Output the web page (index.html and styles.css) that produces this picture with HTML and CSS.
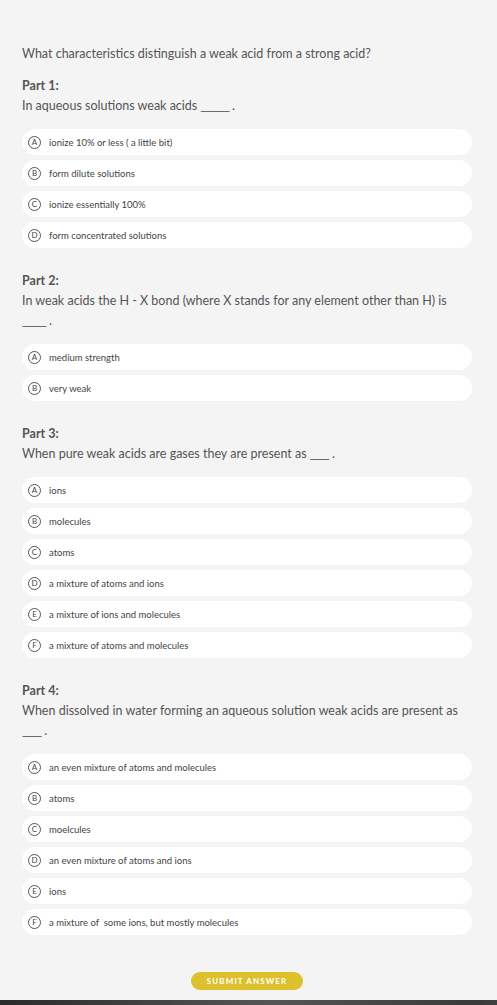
FILE: index.html
```html
<!DOCTYPE html>
<html lang="en">
<head>
  <meta charset="UTF-8">
  <meta name="viewport" content="width=device-width, initial-scale=1.0">
  <title>Weak Acids</title>
  <link rel="stylesheet" href="styles.css">
</head>
<body>
<div class="page">
  <main class="quiz">
    <p class="prompt">What characteristics distinguish a weak acid from a strong acid?</p>

    <section class="part">
      <h3 class="part-title">Part 1:</h3>
      <p class="part-text">In aqueous solutions weak acids <span class="blank">______</span> .</p>
      <ul class="choices">
        <li class="choice"><span class="letter">A</span>ionize 10% or less ( a little bit)</li>
        <li class="choice"><span class="letter">B</span>form dilute solutions</li>
        <li class="choice"><span class="letter">C</span>ionize essentially 100%</li>
        <li class="choice"><span class="letter">D</span>form concentrated solutions</li>
      </ul>
    </section>

    <section class="part">
      <h3 class="part-title">Part 2:</h3>
      <p class="part-text">In weak acids the H - X bond (where X stands for any element other than H) is <span class="blank">_____</span> .</p>
      <ul class="choices">
        <li class="choice"><span class="letter">A</span>medium strength</li>
        <li class="choice"><span class="letter">B</span>very weak</li>
      </ul>
    </section>

    <section class="part">
      <h3 class="part-title">Part 3:</h3>
      <p class="part-text">When pure weak acids are gases they are present as <span class="blank">____</span> .</p>
      <ul class="choices">
        <li class="choice"><span class="letter">A</span>ions</li>
        <li class="choice"><span class="letter">B</span>molecules</li>
        <li class="choice"><span class="letter">C</span>atoms</li>
        <li class="choice"><span class="letter">D</span>a mixture of atoms and ions</li>
        <li class="choice"><span class="letter">E</span>a mixture of ions and molecules</li>
        <li class="choice"><span class="letter">F</span>a mixture of atoms and molecules</li>
      </ul>
    </section>

    <section class="part">
      <h3 class="part-title">Part 4:</h3>
      <p class="part-text">When dissolved in water forming an aqueous solution weak acids are present as <span class="blank">____</span> .</p>
      <ul class="choices">
        <li class="choice"><span class="letter">A</span>an even mixture of atoms and molecules</li>
        <li class="choice"><span class="letter">B</span>atoms</li>
        <li class="choice"><span class="letter">C</span>moelcules</li>
        <li class="choice"><span class="letter">D</span>an even mixture of atoms and ions</li>
        <li class="choice"><span class="letter">E</span>ions</li>
        <li class="choice"><span class="letter">F</span>a mixture of&nbsp; some ions, but mostly molecules</li>
      </ul>
    </section>

    <div class="actions">
      <button class="submit">SUBMIT ANSWER</button>
    </div>
  </main>
</div>
</body>
</html>
```

FILE: styles.css
```css
* {
  box-sizing: border-box;
}

html, body {
  margin: 0;
  padding: 0;
}

body {
  background: linear-gradient(100deg, #2a2a2a, #555 40%, #3a3a3a 70%, #666);
  font-family: Lato, "Open Sans", sans-serif;
  color: #555;
}

.page {
  background: #f4f4f4;
  height: 1000px;
}

.quiz {
  padding: 44px 25px 0 22px;
}

.prompt {
  margin: 0 0 12px;
  font-size: 12.5px;
  line-height: 20px;
}

.part {
  margin-bottom: 23px;
}

.part-title {
  margin: 0;
  font-size: 12.5px;
  line-height: 20px;
  font-weight: bold;
}

.part-text {
  margin: 0 0 13px;
  font-size: 12.5px;
  line-height: 20px;
}

/* underscores joined into one line */
.blank {
  letter-spacing: -1px;
}

.choices {
  list-style: none;
  margin: 0;
  padding: 0;
  display: flex;
  flex-direction: column;
  gap: 5px;
}

.choice {
  display: flex;
  align-items: center;
  height: 26px;
  padding-left: 6px;
  background: #fff;
  border-radius: 13px;
  font-size: 9.5px;
  color: #444;
}

.letter {
  display: inline-flex;
  align-items: center;
  justify-content: center;
  width: 13px;
  height: 13px;
  margin-right: 8px;
  border: 1px solid #555;
  border-radius: 50%;
  font-size: 8px;
  line-height: 1;
  color: #444;
}

.actions {
  display: flex;
  justify-content: center;
  padding-top: 14px;
}

.submit {
  width: 112px;
  height: 18px;
  border: none;
  border-radius: 9px;
  background: #dcc02c;
  color: #fff;
  font-family: Lato, "Open Sans", sans-serif;
  font-size: 8px;
  font-weight: bold;
  letter-spacing: 1.1px;
  padding: 0;
}
```
